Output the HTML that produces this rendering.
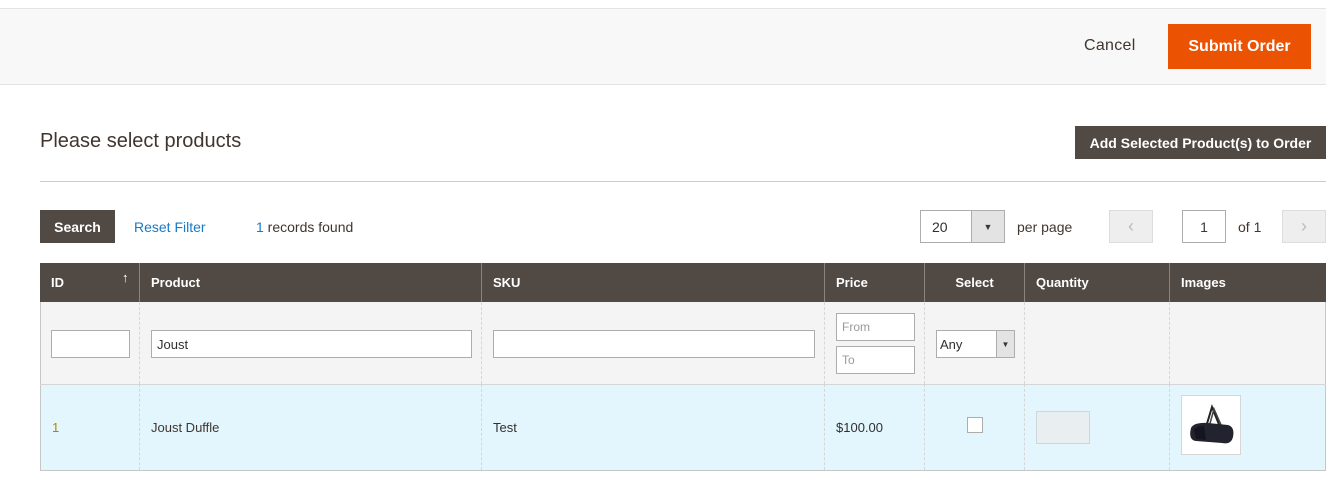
<!DOCTYPE html>
<html><head><style>
*{box-sizing:border-box;margin:0;padding:0}
body{width:1334px;height:492px;background:#fff;font-family:"Liberation Sans",sans-serif;color:#303030;position:relative;overflow:hidden}
.a{position:absolute}
.bar{left:0;top:8px;width:1326px;height:77px;background:#f8f8f8;border-top:1px solid #e3e3e3;border-bottom:1px solid #e3e3e3}
.btn{display:flex;align-items:center;justify-content:center;color:#fff;font-weight:bold}
.inp{background:#fff;border:1px solid #adadad;font-size:13px;padding-left:5px;display:flex;align-items:center}
.hd{top:263px;height:39px;background:#514943;color:#fff;font-weight:bold;font-size:13px;display:flex;align-items:center;padding-left:11px;border-right:1px solid #8a837f}
.fc{top:302px;height:82px;background:#f4f4f4;border-right:1px dashed #d6d6d6}
.dc{top:384px;height:86px;background:#e3f5fd;border-right:1px dashed #d6d6d6;display:flex;align-items:center;padding-left:11px;font-size:13px}
</style></head><body>
<div class="a bar"></div>
<div class="a" style="left:1084px;top:37px;font-size:16px;color:#41362f;letter-spacing:0.3px">Cancel</div>
<div class="a btn" style="left:1168px;top:24px;width:143px;height:45px;background:#eb5202;font-size:16px">Submit Order</div>
<div class="a" style="left:40px;top:130px;font-size:20px;color:#41362f">Please select products</div>
<div class="a btn" style="left:1075px;top:126px;width:251px;height:33px;background:#514943;font-size:14px">Add Selected Product(s) to Order</div>
<div class="a" style="left:40px;top:181px;width:1286px;height:1px;background:#cccccc"></div>
<div class="a btn" style="left:40px;top:210px;width:75px;height:33px;background:#514943;font-size:14px">Search</div>
<div class="a" style="left:134px;top:219px;font-size:14px;color:#1979c3">Reset Filter</div>
<div class="a" style="left:256px;top:219px;font-size:14px;color:#41362f"><span style="color:#1979c3">1</span> records found</div>
<div class="a inp" style="left:920px;top:210px;width:85px;height:33px;padding-left:11px;font-size:14px">20</div>
<div class="a" style="left:971px;top:211px;width:33px;height:31px;background:#e3e3e3;border-left:1px solid #adadad;display:flex;align-items:center;justify-content:center;font-size:9px;color:#41362f">▼</div>
<div class="a" style="left:1017px;top:219px;font-size:14px;color:#41362f">per page</div>
<div class="a" style="left:1109px;top:210px;width:44px;height:33px;background:#eee;border:1px solid #ddd;display:flex;align-items:center;justify-content:center;color:#bbb;font-size:18px">‹</div>
<div class="a inp" style="left:1182px;top:210px;width:44px;height:33px;justify-content:center;padding:0;font-size:14px;color:#41362f">1</div>
<div class="a" style="left:1238px;top:219px;font-size:14px;color:#41362f">of 1</div>
<div class="a" style="left:1282px;top:210px;width:44px;height:33px;background:#eee;border:1px solid #ddd;display:flex;align-items:center;justify-content:center;color:#bbb;font-size:18px">›</div>

<div class="a hd" style="left:40px;width:100px">ID<span style="position:absolute;left:82px;top:7px;font-weight:normal">↑</span></div>
<div class="a hd" style="left:140px;width:342px">Product</div>
<div class="a hd" style="left:482px;width:343px">SKU</div>
<div class="a hd" style="left:825px;width:100px">Price</div>
<div class="a hd" style="left:925px;width:100px;justify-content:center;padding:0">Select</div>
<div class="a hd" style="left:1025px;width:145px">Quantity</div>
<div class="a hd" style="left:1170px;width:156px;border-right:0">Images</div>

<div class="a fc" style="left:40px;width:100px;border-left:1px solid #c6c6c6"></div>
<div class="a fc" style="left:140px;width:342px"></div>
<div class="a fc" style="left:482px;width:343px"></div>
<div class="a fc" style="left:825px;width:100px"></div>
<div class="a fc" style="left:925px;width:100px"></div>
<div class="a fc" style="left:1025px;width:145px"></div>
<div class="a fc" style="left:1170px;width:156px;border-right:1px solid #c6c6c6"></div>
<div class="a inp" style="left:51px;top:330px;width:79px;height:28px"></div>
<div class="a inp" style="left:151px;top:330px;width:321px;height:28px">Joust</div>
<div class="a inp" style="left:493px;top:330px;width:322px;height:28px"></div>
<div class="a inp" style="left:836px;top:313px;width:79px;height:28px;color:#999;font-size:12px">From</div>
<div class="a inp" style="left:836px;top:346px;width:79px;height:28px;color:#999;font-size:12px">To</div>
<div class="a inp" style="left:936px;top:330px;width:79px;height:28px;padding-left:3px">Any</div>
<div class="a" style="left:996px;top:331px;width:18px;height:26px;background:#e3e3e3;border-left:1px solid #adadad;display:flex;align-items:center;justify-content:center;font-size:8px;color:#41362f">▼</div>

<div class="a dc" style="left:40px;width:100px;color:#c07f00;border-left:1px solid #c6c6c6">1</div>
<div class="a dc" style="left:140px;width:342px;color:#41362f">Joust Duffle</div>
<div class="a dc" style="left:482px;width:343px">Test</div>
<div class="a dc" style="left:825px;width:100px">$100.00</div>
<div class="a dc" style="left:925px;width:100px"></div>
<div class="a dc" style="left:1025px;width:145px"></div>
<div class="a dc" style="left:1170px;width:156px;border-right:1px solid #c6c6c6"></div>
<div class="a" style="left:40px;top:384px;width:1286px;height:1px;background:#d6d6d6"></div>
<div class="a" style="left:967px;top:417px;width:16px;height:16px;background:#fff;border:1px solid #adadad"></div>
<div class="a" style="left:1036px;top:411px;width:54px;height:33px;background:#e9eef0;border:1px solid #cfd6da"></div>
<div class="a" style="left:1181px;top:395px;width:60px;height:60px;background:#fff;border:1px solid #d6d6d6">
<svg width="58" height="58" viewBox="0 0 58 58"><path d="M24 31 L30 11 L38 31" stroke="#222" stroke-width="2" fill="none"/><path d="M27 31 L32 13 L40 31" stroke="#444" stroke-width="1.5" fill="none"/><path d="M9 32 Q12 26 26 27 L46 29 Q53 31 51 41 Q49 49 40 47 L14 45 Q6 44 9 32Z" fill="#23232f"/><path d="M12 34 Q14 30 22 30 L24 44 L14 43Z" fill="#151520"/></svg></div>
<div class="a" style="left:40px;top:470px;width:1286px;height:1px;background:#c6c6c6"></div>
</body></html>
